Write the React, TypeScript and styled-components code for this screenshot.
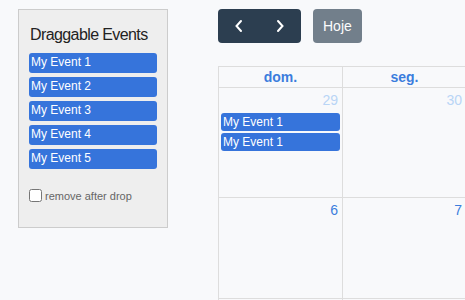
import styled, { createGlobalStyle } from 'styled-components';

const GlobalStyle = createGlobalStyle`
    html, body {
        margin: 0;
        padding: 0;
        background: #f8f9fb;
        overflow: hidden;
        font-family: "Liberation Sans", Arial, sans-serif;
    }
`;

const Page = styled.div`
    display: flex;
    align-items: flex-start;
    gap: 50px;
    padding: 9px 0 0 18px;
    width: 1200px;
`;

const ExternalEvents = styled.div`
    flex: none;
    width: 128px;
    padding: 15px 10px 25px 10px;
    background: #eeeeee;
    border: 1px solid #cccccc;
`;

const PanelTitle = styled.h4`
    margin: 0 0 9px 1px;
    font-size: 16px;
    font-weight: 400;
    line-height: 19px;
    letter-spacing: -0.6px;
    white-space: nowrap;
    color: #222;
`;

const EventList = styled.div`
    display: flex;
    flex-direction: column;
    gap: 4px;
`;

const DragEvent = styled.div`
    height: 20px;
    line-height: 19px;
    padding: 0 2px;
    border-radius: 3px;
    background: #3674db;
    color: #fff;
    font-size: 12px;
    white-space: nowrap;
`;

const DropOption = styled.label`
    display: flex;
    align-items: center;
    gap: 3px;
    margin-top: 20px;
    font-size: 11px;
    color: #666;
`;

const Checkbox = styled.input`
    margin: 0;
    width: 13px;
    height: 13px;
`;

const Calendar = styled.div`
    flex: none;
    width: 869px;
`;

const Toolbar = styled.div`
    display: flex;
    gap: 12px;
    margin-bottom: 23px;
`;

const ButtonGroup = styled.div`
    display: flex;
    border-radius: 4px;
    overflow: hidden;
`;

const NavButton = styled.button`
    display: flex;
    align-items: center;
    justify-content: center;
    width: 41.5px;
    height: 34px;
    padding: 0;
    border: none;
    background: #2c3e50;
    color: #fff;
`;

const TodayButton = styled.button<{ $disabled?: boolean }>`
    height: 34px;
    padding: 0 10px;
    border: none;
    border-radius: 4px;
    background: #2c3e50;
    color: #fff;
    font-family: "Liberation Sans", Arial, sans-serif;
    font-size: 14px;
    opacity: ${(p) => (p.$disabled ? 0.65 : 1)};
`;

const Grid = styled.div`
    display: grid;
    grid-template-columns: repeat(7, 124px);
    grid-template-rows: 21px 110px 101px 101px;
    border-top: 1px solid #dddddd;
    border-left: 1px solid #dddddd;
`;

const HeaderCell = styled.div`
    border-right: 1px solid #dddddd;
    border-bottom: 1px solid #dddddd;
    text-align: center;
    font-size: 14px;
    font-weight: 700;
    line-height: 20px;
    color: #3b7ddd;
`;

const DayCell = styled.div`
    display: flex;
    flex-direction: column;
    border-right: 1px solid #dddddd;
    border-bottom: 1px solid #dddddd;
`;

const DayNumber = styled.div<{ $other?: boolean }>`
    padding: 4px 4px 0 0;
    text-align: right;
    font-size: 14px;
    line-height: 16px;
    color: ${(p) => (p.$other ? '#b9d5f6' : '#3b7ddd')};
    margin-bottom: 5px;
`;

const CellEvent = styled.div`
    height: 18px;
    margin: 0 2px 2px 2px;
    padding: 0 2px;
    border-radius: 3px;
    background: #3674db;
    color: #fff;
    font-size: 12px;
    line-height: 18px;
    white-space: nowrap;
`;

const Chevron = ({ dir }: { dir: 'left' | 'right' }) => (
    <svg width="10" height="14" viewBox="0 0 10 14" fill="none" stroke="#fff" strokeWidth="2" strokeLinecap="round">
        {dir === 'left' ? <path d="M7 2 L2.5 7 L7 12" /> : <path d="M3 2 L7.5 7 L3 12" />}
    </svg>
);

const weekDays = ['dom.', 'seg.', 'ter.', 'qua.', 'qui.', 'sex.', 'sáb.'];

const weeks = [
    [29, 30, 1, 2, 3, 4, 5],
    [6, 7, 8, 9, 10, 11, 12],
    [13, 14, 15, 16, 17, 18, 19],
];

const dropped: Record<string, string[]> = { '0-0': ['My Event 1', 'My Event 1'] };

const App = () => {
    return (
        <>
            <GlobalStyle />
            <Page>
                <ExternalEvents>
                    <PanelTitle>Draggable Events</PanelTitle>
                    <EventList>
                        {[1, 2, 3, 4, 5].map((n) => (
                            <DragEvent key={n}>My Event {n}</DragEvent>
                        ))}
                    </EventList>
                    <DropOption>
                        <Checkbox type="checkbox" />
                        remove after drop
                    </DropOption>
                </ExternalEvents>
                <Calendar>
                    <Toolbar>
                        <ButtonGroup>
                            <NavButton><Chevron dir="left" /></NavButton>
                            <NavButton><Chevron dir="right" /></NavButton>
                        </ButtonGroup>
                        <TodayButton $disabled>Hoje</TodayButton>
                    </Toolbar>
                    <Grid>
                        {weekDays.map((d) => (
                            <HeaderCell key={d}>{d}</HeaderCell>
                        ))}
                        {weeks.map((week, wi) =>
                            week.map((day, di) => (
                                <DayCell key={`${wi}-${di}`}>
                                    <DayNumber $other={wi === 0 && day > 20}>{day}</DayNumber>
                                    {(dropped[`${wi}-${di}`] || []).map((title, i) => (
                                        <CellEvent key={i}>{title}</CellEvent>
                                    ))}
                                </DayCell>
                            ))
                        )}
                    </Grid>
                </Calendar>
            </Page>
        </>
    );
};

export default App;
